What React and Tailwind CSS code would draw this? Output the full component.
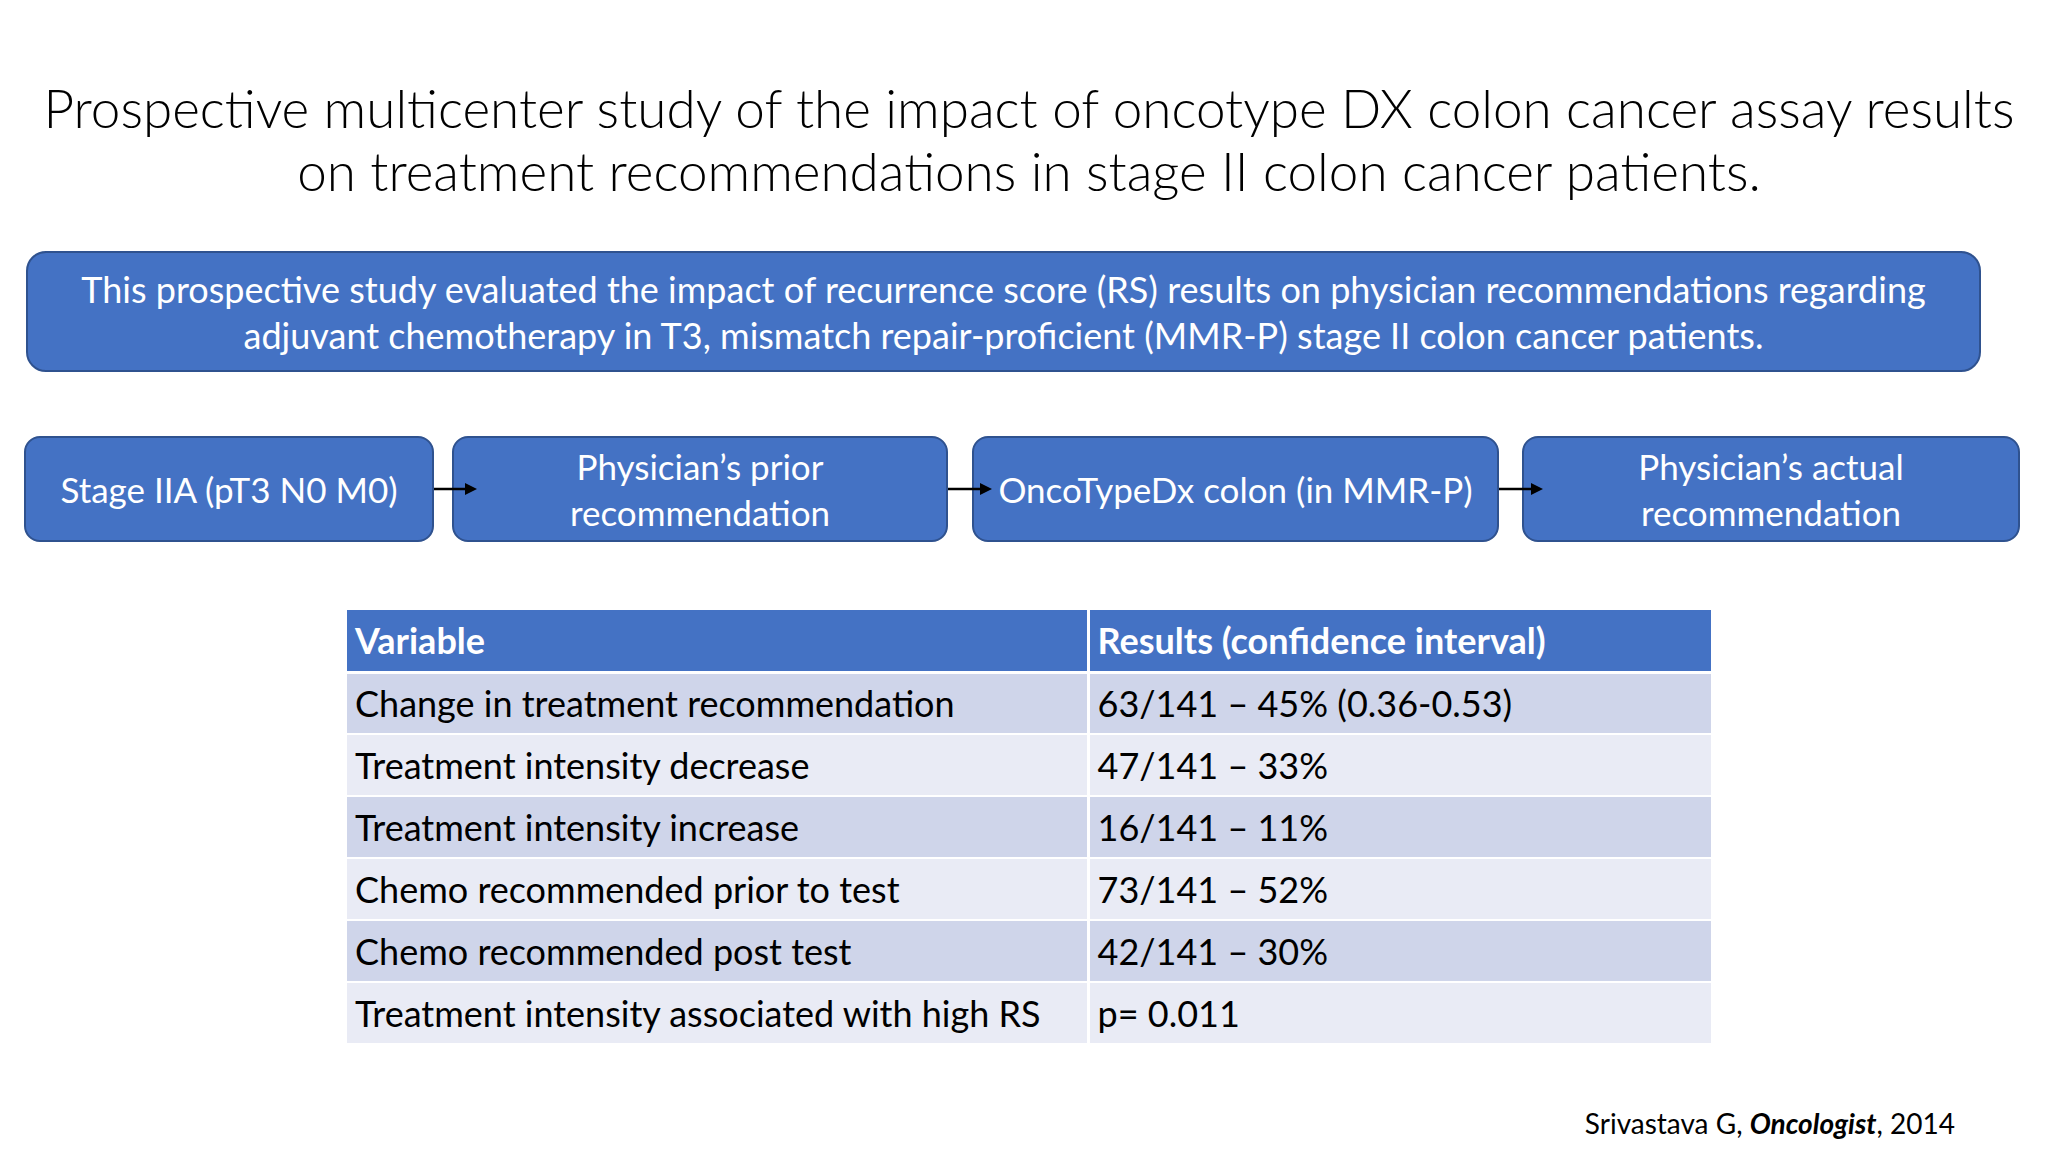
import React from 'react';

const rows = [
    ['Change in treatment recommendation', '63/141 – 45% (0.36-0.53)'],
    ['Treatment intensity decrease', '47/141 – 33%'],
    ['Treatment intensity increase', '16/141 – 11%'],
    ['Chemo recommended prior to test', '73/141 – 52%'],
    ['Chemo recommended post test', '42/141 – 30%'],
    ['Treatment intensity associated with high RS', 'p= 0.011'],
];

// connector arrow, drawn over the next box like in the slide
const Arrow = ({ gap, length }) => (
    <div className="relative z-10 h-full" style={{ width: gap }}>
        <svg
            width={length}
            height="14"
            viewBox={`0 0 ${length} 14`}
            className="absolute left-0 top-1/2 -translate-y-1/2 overflow-visible"
        >
            <line x1="0" y1="7" x2={length - 10} y2="7" stroke="#000" strokeWidth="2.5" />
            <polygon points={`${length - 12},1 ${length},7 ${length - 12},13`} fill="#000" />
        </svg>
    </div>
);

const FlowBox = ({ width, children }) => (
    <div
        className="h-full flex items-center justify-center text-center bg-[#4472c4] border-2 border-[#2f528f] rounded-[16px] text-white text-[35px] leading-[46px]"
        style={{ width }}
    >
        {children}
    </div>
);

export default function App() {
    return (
        <div className="w-[2048px] h-[1152px] bg-white flex flex-col font-['Lato',sans-serif] text-black overflow-hidden">
            <h1 className="pt-[76px] pl-[10px] text-center font-light text-[53px] leading-[63px]">
                Prospective multicenter study of the impact of oncotype DX colon cancer assay results
                <br />
                on treatment recommendations in stage II colon cancer patients.
            </h1>

            <div className="mt-[49px] ml-[26px] w-[1955px] h-[121px] flex items-center justify-center bg-[#4472c4] border-2 border-[#2f528f] rounded-[20px] text-white text-center text-[36px] leading-[46px]">
                <p>
                    This prospective study evaluated the impact of recurrence score (RS) results on physician recommendations regarding
                    <br />
                    adjuvant chemotherapy in T3, mismatch repair-proficient (MMR-P) stage II colon cancer patients.
                </p>
            </div>

            <div className="mt-[64px] ml-[24px] h-[106px] flex items-center">
                <FlowBox width={410}>Stage IIA (pT3 N0 M0)</FlowBox>
                <Arrow gap={18} length={43} />
                <FlowBox width={496}>
                    Physician’s prior
                    <br />
                    recommendation
                </FlowBox>
                <Arrow gap={24} length={44} />
                <FlowBox width={527}>OncoTypeDx colon (in MMR-P)</FlowBox>
                <Arrow gap={23} length={44} />
                <FlowBox width={498}>
                    Physician’s actual
                    <br />
                    recommendation
                </FlowBox>
            </div>

            <table className="mt-[68px] ml-[347px] w-[1364px] border-collapse text-[36px]">
                <thead>
                    <tr className="bg-[#4472c4] text-white h-[62px]">
                        <th className="w-[741px] text-left font-bold pl-[8px] border-r-[3px] border-b-[3px] border-white">Variable</th>
                        <th className="text-left font-bold pl-[8px] border-b-[3px] border-white">Results (confidence interval)</th>
                    </tr>
                </thead>
                <tbody>
                    {rows.map(([label, value], i) => (
                        <tr key={label} className={`h-[62px] ${i % 2 === 0 ? 'bg-[#cfd5ea]' : 'bg-[#e9ebf5]'}`}>
                            <td className="pl-[8px] border-r-[3px] border-b-[2px] border-white">{label}</td>
                            <td className="pl-[8px] border-b-[2px] border-white">{value}</td>
                        </tr>
                    ))}
                </tbody>
            </table>

            <div className="mt-auto mb-[8px] pr-[93px] text-right text-[28px]">
                Srivastava G, <b><i>Oncologist</i></b>, 2014
            </div>
        </div>
    );
}
